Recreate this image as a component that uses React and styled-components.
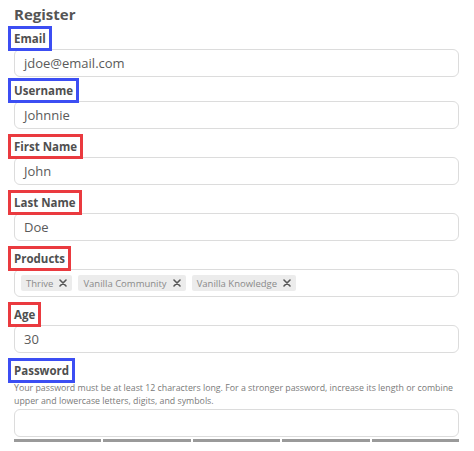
import React from "react";
import styled, { createGlobalStyle } from "styled-components";

const Global = createGlobalStyle`
  html, body { margin: 0; padding: 0; background: #fff; }
  body { font-family: "Open Sans", "Liberation Sans", sans-serif; }
  * { box-sizing: border-box; }
`;

const Page = styled.div`
  padding: 4px 15px 0 14px;
  width: 474px;
`;

const Title = styled.h1`
  margin: 0 0 2px;
  font-size: 15px;
  line-height: 20px;
  font-weight: 700;
  color: #555;
`;

const Field = styled.div`
  display: flex;
  flex-direction: column;
  align-items: flex-start;
  margin-bottom: ${(p) => (p.$tight ? "1px" : "5px")};
`;

const LabelBox = styled.label`
  position: relative;
  z-index: 1;
  margin-left: -6px;
  margin-bottom: -2px;
  border: 3px solid ${(p) => (p.$tone === "blue" ? "#3c4ef3" : "#ea3a3f")};
  background: #fff;
  padding: 0 3px;
  font-size: 11.5px;
  line-height: 19px;
  font-weight: 700;
  color: #4f4f4f;
`;

const Input = styled.div`
  width: 100%;
  height: 28px;
  border: 1px solid #dcdcdc;
  border-radius: 6px;
  padding: 0 9px;
  display: flex;
  align-items: center;
  font-size: 13px;
  color: #5a5a5a;
`;

const TagInput = styled(Input)`
  padding: 0 6px;
  gap: 6px;
`;

const Tag = styled.span`
  display: inline-flex;
  align-items: center;
  gap: 6px;
  height: 16px;
  padding: 0 5px 0 5px;
  background: #ececec;
  border-radius: 2px;
  font-size: 9.5px;
  color: #8a8a8a;
`;

const Close = styled.svg`
  width: 8px;
  height: 8px;
  display: block;
`;

const Help = styled.p`
  margin: 1px 0 1px;
  font-size: 8.8px;
  line-height: 13px;
  color: #7a7a7a;
`;

const Strength = styled.div`
  display: grid;
  grid-template-columns: repeat(5, 1fr);
  gap: 2px;
  width: 100%;
  margin-top: 2px;
`;

const Bar = styled.div`
  height: 3px;
  background: #9a9a9a;
`;

const X = () => (
  <Close viewBox="0 0 8 8">
    <path d="M1 1L7 7M7 1L1 7" stroke="#555" strokeWidth="1.6" strokeLinecap="round" />
  </Close>
);

export default function App() {
  return (
    <Page>
      <Global />
      <Title>Register</Title>
      <Field $tight>
        <LabelBox $tone="blue">Email</LabelBox>
        <Input>jdoe@email.com</Input>
      </Field>
      <Field>
        <LabelBox $tone="blue">Username</LabelBox>
        <Input>Johnnie</Input>
      </Field>
      <Field>
        <LabelBox $tone="red">First Name</LabelBox>
        <Input>John</Input>
      </Field>
      <Field>
        <LabelBox $tone="red">Last Name</LabelBox>
        <Input>Doe</Input>
      </Field>
      <Field>
        <LabelBox $tone="red">Products</LabelBox>
        <TagInput>
          {["Thrive", "Vanilla Community", "Vanilla Knowledge"].map((t) => (
            <Tag key={t}>
              {t}
              <X />
            </Tag>
          ))}
        </TagInput>
      </Field>
      <Field>
        <LabelBox $tone="red">Age</LabelBox>
        <Input>30</Input>
      </Field>
      <Field>
        <LabelBox $tone="blue">Password</LabelBox>
        <Help>
          Your password must be at least 12 characters long. For a stronger password, increase its length or combine
          upper and lowercase letters, digits, and symbols.
        </Help>
        <Input />
        <Strength>
          {[0, 1, 2, 3, 4].map((i) => (
            <Bar key={i} />
          ))}
        </Strength>
      </Field>
    </Page>
  );
}
